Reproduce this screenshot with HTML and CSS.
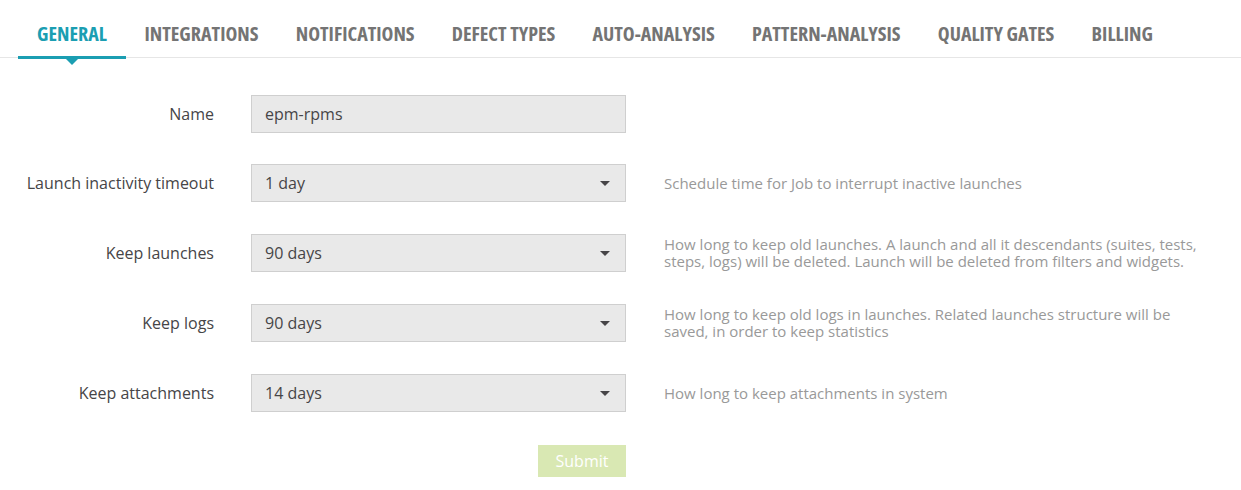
FILE: index.html
```html
<!DOCTYPE html>
<html lang="en">
<head>
<meta charset="utf-8">
<title>Project settings</title>
<link rel="stylesheet" href="styles.css">
</head>
<body>
<nav class="tabs">
  <a class="tab active">GENERAL</a>
  <a class="tab">INTEGRATIONS</a>
  <a class="tab">NOTIFICATIONS</a>
  <a class="tab">DEFECT TYPES</a>
  <a class="tab">AUTO-ANALYSIS</a>
  <a class="tab">PATTERN-ANALYSIS</a>
  <a class="tab">QUALITY GATES</a>
  <a class="tab">BILLING</a>
</nav>
<form class="form">
  <div class="row first">
    <label class="label">Name</label>
    <div class="field input">epm-rpms</div>
    <div class="desc"></div>
  </div>
  <div class="row">
    <label class="label">Launch inactivity timeout</label>
    <div class="field select"><span>1 day</span><span class="caret"></span></div>
    <div class="desc">Schedule time for Job to interrupt inactive launches</div>
  </div>
  <div class="row">
    <label class="label">Keep launches</label>
    <div class="field select"><span>90 days</span><span class="caret"></span></div>
    <div class="desc">How long to keep old launches. A launch and all it descendants (suites, tests, steps, logs) will be deleted. Launch will be deleted from filters and widgets.</div>
  </div>
  <div class="row">
    <label class="label">Keep logs</label>
    <div class="field select"><span>90 days</span><span class="caret"></span></div>
    <div class="desc">How long to keep old logs in launches. Related launches structure will be saved, in order to keep statistics</div>
  </div>
  <div class="row">
    <label class="label">Keep attachments</label>
    <div class="field select"><span>14 days</span><span class="caret"></span></div>
    <div class="desc">How long to keep attachments in system</div>
  </div>
  <div class="row actions">
    <div></div>
    <div class="submit-wrap"><button type="button" class="submit">Submit</button></div>
  </div>
</form>
</body>
</html>
```
FILE: styles.css
```css
* { box-sizing: border-box; }
body {
  margin: 0;
  background: #fff;
  font-family: "Open Sans", sans-serif;
  color: #464547;
}
.tabs {
  display: flex;
  padding: 0 0 0 18px;
  height: 58px;
  border-bottom: 1px solid #e6e6e6;
}
.tab {
  position: relative;
  display: block;
  padding: 20px 18.6px 0 18.6px;
  height: 58px;
  line-height: 27px;
  font-family: "Open Sans", sans-serif;
  font-stretch: 75%;
  font-weight: 700;
  font-size: 20px;
  color: #747474;
  cursor: pointer;
}
.tab:first-child { padding-left: 19px; padding-right: 19px; }
.tab.active {
  color: #1b9eb2;
  border-bottom: 3px solid #1b9eb2;
  height: 59px;
}
.tab.active::after {
  content: "";
  position: absolute;
  left: 50%;
  bottom: -9px;
  margin-left: -6px;
  border-left: 6px solid transparent;
  border-right: 6px solid transparent;
  border-top: 6px solid #1b9eb2;
}
.form {
  padding-top: 37px;
  display: flex;
  flex-direction: column;
  gap: 32px;
}
.row {
  display: grid;
  grid-template-columns: 214px 375px 545px;
  column-gap: 37px;
  align-items: center;
}
.row.first { margin-bottom: -1px; }
.row .desc { margin-left: 1px; }
.label {
  text-align: right;
  font-size: 16px;
  color: #464547;
}
.field {
  height: 38px;
  background: #e9e9e9;
  border: 1px solid #cfcfcf;
  padding: 0 13px;
  display: flex;
  align-items: center;
  font-size: 16px;
  color: #464547;
}
.select { justify-content: space-between; }
.caret {
  width: 0;
  height: 0;
  border-left: 5px solid transparent;
  border-right: 5px solid transparent;
  border-top: 5px solid #464547;
  margin-right: 2px;
}
.desc {
  font-size: 15px;
  line-height: 17px;
  color: #999;
}
.actions { margin-top: 1px; }
.submit-wrap { display: flex; justify-content: flex-end; }
.submit {
  width: 88px;
  height: 32px;
  border: none;
  background: #d9e8b3;
  color: #fff;
  font-family: "Open Sans", sans-serif;
  font-size: 16px;
  padding: 0;
}
```
